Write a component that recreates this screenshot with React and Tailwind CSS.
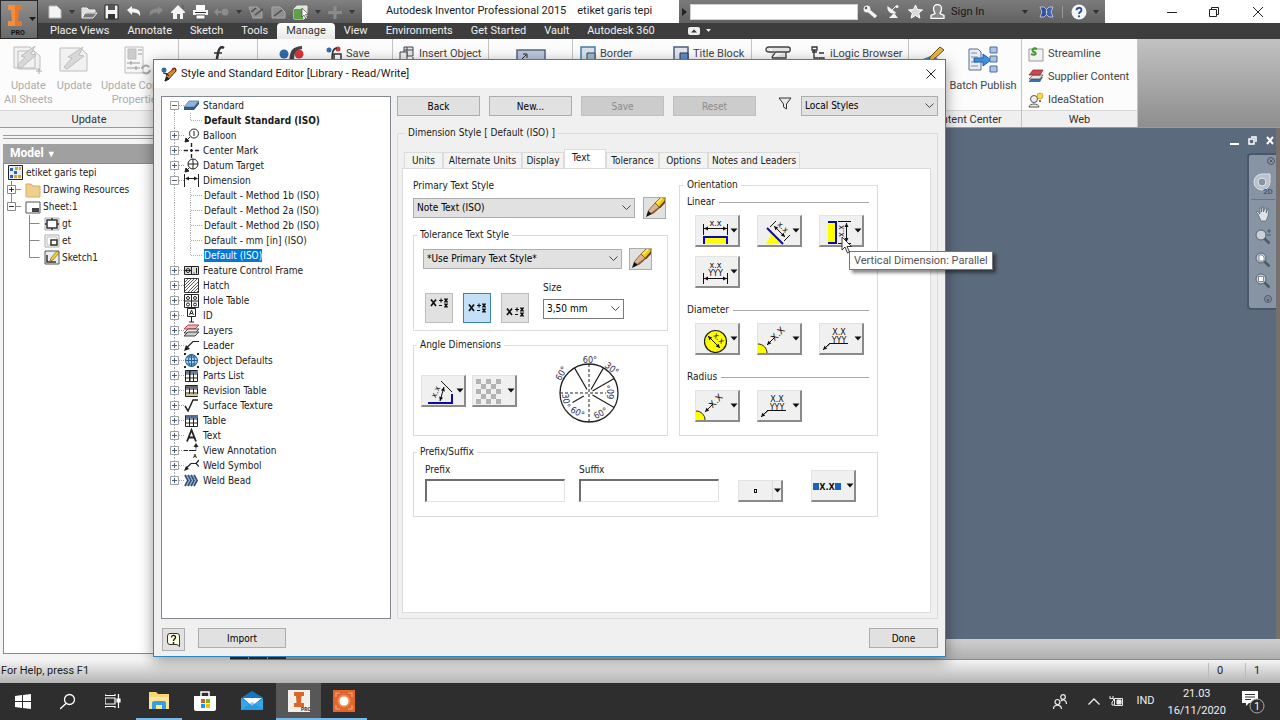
import React from "react";

const UI = "font-['Roboto','Liberation_Sans',sans-serif]";
const DLG = "font-['DejaVu_Sans_Condensed','DejaVu_Sans',sans-serif]";

/* ---------- quick access toolbar ---------- */

const quick = [
  ["New", <path key="a" d="M4 3h8l4 4v8H4z" fill="#f4f4f4" stroke="#bbb" />],
  ["caret"],
  ["Open", <g key="a"><path d="M3 5h5l2 2h6v2H7l-4 6z" fill="#ddd" stroke="#eee" /><path d="M6 10h12l-4 5H3z" fill="#777" stroke="#eee" /></g>],
  ["Save", <g key="a"><path d="M4 2h13v14H4z" fill="#f4f4f4" stroke="#222" /><path d="M7 2h7v5H7z" fill="#555" /><path d="M7 11h7v5H7z" fill="#333" /></g>],
  ["Undo", <path key="a" d="M3 7l5-4v2.500c6 0 9 2 8 8-1-3-3-4-8-4V12z" fill="#f4f4f4" />],
  ["Redo", <path key="a" d="M17 7l-5-4v2.500c-6 0-9 2-8 8 1-3 3-4 8-4V12z" fill="#8b8b8b" />],
  ["Home", <g key="a"><path d="M3 9l7-7 7 7v1h-2v6H5v-6H3z" fill="#f4f4f4" /><path d="M9 11h3v5H9zM14 2h2v4h-2z" fill="#666" /></g>],
  ["Print", <g key="a"><path d="M6 2h9v5H6z" fill="#fff" /><path d="M3 7h15v5H3z" fill="#f4f4f4" /><path d="M5 9.500h11" stroke="#333" /><path d="M6 12h9v4H6z" fill="#fff" stroke="#555" /></g>],
  ["Return", <g key="a" fill="#8d8d8d"><path d="M2 9l4-4v3h3v2H6v3z" /><circle cx="13" cy="9" r="3.500" /></g>],
  ["caret"],
  ["Update", <g key="a"><path d="M3 4h8l5 5v6H7z" fill="#8f8f8f" stroke="#a8a8a8" /><path d="M9 12l8-6M5 9l5-4" stroke="#4c4c4c" strokeWidth="1.500" /></g>],
  ["Local update", <g key="a"><path d="M4 4h8l5 5v6H4z" fill="#8f8f8f" stroke="#a8a8a8" /><path d="M6 13l8-6" stroke="#4c4c4c" strokeWidth="1.500" /></g>],
  ["Select", <g key="a"><path d="M3 6l3-3h10v10l-3 3H3z" fill="#d9e8d2" stroke="#eee" /><path d="M3 6h9v10H3z" fill="#5fa04a" /><path d="M11 5v9l2-2 2 4 1.500-1-2-3.500h3z" fill="#fff" stroke="#333" strokeWidth=".6" /></g>],
  ["caret"],
  ["Add", <path key="a" d="M10 3v13M3 9.500h14" stroke="#8b8b8b" strokeWidth="3" />],
  ["caret"],
];

function QuickBar() {
  return (
    <div className="flex w-[324px] shrink-0 items-center justify-between pl-1.5 pr-1">
      {quick.map(([n, d], i) =>
        n === "caret" ? (
          <button key={i} aria-label="More" className="flex w-3 justify-center">
            <svg width="6" height="4"><path d="M0 0h6L3 4z" fill="#3a3a3a" /></svg>
          </button>
        ) : (
          <button key={i} aria-label={n} className="flex w-[22px] justify-center">
            <svg width="20" height="18" fill="none">{d}</svg>
          </button>
        )
      )}
    </div>
  );
}

function InfoCenter() {
  return (
    <div className="flex w-[426px] shrink-0 items-center bg-gradient-to-b from-[#7b7b7b] to-[#616161]">
      <button aria-label="Collapse search" className="flex h-full w-[11px] items-center justify-center">
        <svg width="5" height="8"><path d="M0 0l5 4-5 4z" fill="#222" /></svg>
      </button>
      <input aria-label="Search help" className="h-[16px] w-[168px] border border-[#d0d0d0] bg-white" />
      <button aria-label="Key" className="flex w-6 justify-center">
        <svg width="16" height="16"><circle cx="5" cy="5" r="4" fill="#f2f2f2" stroke="#444" strokeWidth=".6" /><path d="M7 7l7 6" stroke="#f2f2f2" strokeWidth="3.500" /><circle cx="4" cy="4" r="1.200" fill="#555" /></svg>
      </button>
      <button aria-label="Communication" className="flex w-[22px] justify-center">
        <svg width="15" height="15"><path d="M1.500 2c-1 6 4 9 9 7z" fill="#f2f2f2" /><path d="M6 6l4-4" stroke="#f2f2f2" /><path d="M3 14h9l-4-5z" fill="#f2f2f2" /><circle cx="11" cy="2.500" r="1.500" fill="#f2f2f2" /></svg>
      </button>
      <button aria-label="Favorites" className="flex w-[22px] justify-center">
        <svg width="15" height="15"><path d="M7.500 1l2 4.500 5 .4-3.800 3.200 1.200 5-4.400-2.600-4.400 2.600 1.200-5L.5 5.900l5-.4z" fill="#d8d8d8" stroke="#fff" /></svg>
      </button>
      <button className="flex items-center gap-1.5 pl-1 leading-6 text-[#161616]">
        <svg width="15" height="15"><path d="M3.500 4.500a4 4 0 018 0c0 3-1.500 4-1.500 5l4 2v3H1v-3l4-2c0-1-1.500-2-1.500-5z" fill="#888" stroke="#fff" strokeWidth="1.300" /></svg>
        <span>Sign In</span>
      </button>
      <span className="flex-1" />
      <svg width="6" height="4"><path d="M0 0h6L3 4z" fill="#2f2f2f" /></svg>
      <button aria-label="Exchange" className="ml-[10px] flex w-4 justify-center">
        <svg width="15" height="12"><path d="M1 1h4l3 3-1 2 1 2-3 3H1l2-5z" fill="#2f4f9c" stroke="#dfe6f6" strokeWidth=".7" /><path d="M14 1h-4L7 4l1 2-1 2 3 3h4l-2-5z" fill="#3d62b5" stroke="#dfe6f6" strokeWidth=".7" /></svg>
      </button>
      <span className="mx-2 h-3 w-px bg-[#999]" />
      <button aria-label="Help" className="flex w-4 justify-center">
        <svg width="16" height="16"><circle cx="8" cy="8" r="7.500" fill="#f4f6fb" /><path d="M5.500 6.200C5.500 3 10.500 3 10.500 6c0 2-2.500 2-2.500 4" fill="none" stroke="#2a4a9a" strokeWidth="1.800" /><circle cx="8" cy="12.300" r="1.100" fill="#2a4a9a" /></svg>
      </button>
      <svg className="mx-1.5" width="6" height="4"><path d="M0 0h6L3 4z" fill="#2f2f2f" /></svg>
    </div>
  );
}

const menu = ["Place Views", "Annotate", "Sketch", "Tools", "Manage", "View", "Environments", "Get Started", "Vault", "Autodesk 360"];

function Header() {
  return (
    <header className="flex bg-[#3d3d3d]">
      <button aria-label="Inventor menu" className="flex h-[39px] w-[38px] shrink-0 border border-[#2a2a2a] bg-gradient-to-b from-[#8f8f8f] to-[#6a6a6a]">
        <svg width="36" height="37">
          <path d="M7 4h14v5h-3l-1 11h4v5H7v-5h4l-1-11H7z" fill="#e8772a" />
          <path d="M7 4h7v21H7v-5h4l-1-11H7z" fill="#f59a4a" opacity=".7" />
          <path d="M28 16h7l-3.500 4z" fill="#1d1d1d" />
          <text x="10" y="34" fontSize="7" fontWeight="bold" fill="#111" fontFamily="Roboto, sans-serif">PRO</text>
        </svg>
      </button>
      <div className="flex min-w-0 flex-1 flex-col">
        <div className="flex h-[23px] bg-gradient-to-b from-[#818181] to-[#5a5a5a]">
          <QuickBar />
          <div className="flex flex-1 items-center gap-[11px] bg-white px-6 text-[#1c1c1c]">
            <span>Autodesk Inventor Professional 2015</span>
            <span>etiket garis tepi</span>
          </div>
          <InfoCenter />
          <div className="flex w-[175px] shrink-0 items-center justify-end bg-white text-[#222]">
            <button aria-label="Minimize" className="flex w-[42px] justify-center"><svg width="10" height="10"><path d="M0 5.500h10" stroke="currentColor" /></svg></button>
            <button aria-label="Restore" className="flex w-[42px] justify-center"><svg width="10" height="10" fill="none" stroke="currentColor"><path d="M.5 2.500h7v7h-7zM2.500 2V.5h7v7H8" /></svg></button>
            <button aria-label="Close" className="flex w-[45px] justify-center"><svg width="10" height="10" stroke="currentColor"><path d="M0 0l10 10M10 0L0 10" /></svg></button>
          </div>
        </div>
        <nav className="flex h-4 items-stretch pl-[3px] text-[#f0f0f0]">
          {menu.map((m) => (
            <button key={m} className={m === "Manage" ? "rounded-t-sm bg-gradient-to-b from-white to-[#e8e8e8] px-[9px] text-[#333]" : "px-[9px]"}>{m}</button>
          ))}
          <button aria-label="Ribbon display" className="flex items-center gap-1.5 pl-6">
            <svg width="12" height="8"><rect width="12" height="8" rx="2" fill="#eee" /><path d="M3 5.500h6l-3-3z" fill="#333" /></svg>
            <svg width="5" height="4"><path d="M0 0h5L2.500 3z" fill="#eee" /></svg>
          </button>
        </nav>
      </div>
    </header>
  );
}

/* ---------- ribbon ---------- */

function Panel({ className, title, children }) {
  return (
    <section className={"flex shrink-0 flex-col border-r border-[#c4c4c4] " + className}>
      <div className="flex h-[71px] overflow-hidden bg-[#fcfcfc] pt-[7px]">{children}</div>
      <h2 className="h-[17px] border-t border-[#d8d8d8] bg-[#efefef] text-center leading-[17px] text-[#333]">{title}</h2>
    </section>
  );
}

function Small({ icon, children, className = "" }) {
  return (
    <button className={"flex items-center gap-1 text-left leading-4 text-[#444] " + className}>
      <svg width="16" height="16" fill="none">{icon}</svg>
      <span>{children}</span>
    </button>
  );
}

function Ribbon() {
  return (
    <div className="flex h-[89px] whitespace-nowrap border-b border-[#9a9a9a] bg-gradient-to-b from-[#c2c2c2] to-[#8e8e8e]">
      <Panel className="w-[179px]" title="Update">
        <button className="flex w-[58px] flex-col items-center leading-[14px] text-[#adadad]">
          <svg width="30" height="33" fill="none" stroke="#bdbdbd"><path d="M1 1h16l5 5v16H1zM5 5h16l6 5v13H5z" fill="#f1f1f1" /><path d="M4 20l8-9-4-1L22 0l-4 8 5 1-15 13z" fill="#d8d8d8" /><path d="M23 25h6M26 22v6" stroke="#aaa" /></svg>
          <span>Update<br />All Sheets</span>
        </button>
        <button className="flex w-9 flex-col items-center leading-[14px] text-[#adadad]">
          <svg width="30" height="33" fill="none" stroke="#bdbdbd"><path d="M1 2h20l7 6v17H1z" fill="#f1f1f1" /><path d="M5 21l8-9-4-1L24 1l-4 8 5 1L8 23z" fill="#d8d8d8" /></svg>
          <span>Update</span>
        </button>
        <button className="ml-1 flex w-[84px] flex-col items-center leading-[14px] text-[#adadad]">
          <svg width="30" height="33" fill="none" stroke="#bdbdbd"><path d="M3 1h18v26H3z" fill="#f6f6f6" /><path d="M6 3h8v10H6z" fill="#ccc" /><path d="M16 4h4M16 8h4M5 17h13M5 22h13M9 15v4M14 20v4" stroke="#999" /><path d="M20 23a4 4 0 017-2M28 24a4 4 0 01-7 2" stroke="#aaa" strokeWidth="2" /></svg>
          <span>Update Copied<br />Properties</span>
        </button>
      </Panel>
      <Panel className="w-[79px]">
        <button aria-label="Parameters" className="flex w-full justify-center">
          <svg width="24" height="30" fill="none" stroke="#333"><path d="M18 2c-3-2-5 0-6 5l-2 11c-1 4-3 5-5 3" strokeWidth="2.500" /><path d="M8 7h8" strokeWidth="1.500" /></svg>
        </button>
      </Panel>
      <Panel className="w-[135px]">
        <button aria-label="Styles Editor" className="flex w-[68px] justify-center">
          <svg width="26" height="30"><circle cx="5" cy="8" r="4.500" fill="#2f6cab" /><circle cx="20" cy="8" r="4.500" fill="#d8363d" /><path d="M10 18C11 5 12 1 23 0v3c-7 1-8 3-8 15z" fill="#444" /></svg>
        </button>
        <Small className="h-4" icon={<g><circle cx="3" cy="4" r="2.500" fill="#2f6cab" /><circle cx="12" cy="3" r="2.500" fill="#d8363d" /><path d="M6 14C6 6 7 2 11 2M8 8h7v7H8z" stroke="#333" strokeWidth="1.500" /></g>}>Save</Small>
      </Panel>
      <Panel className="w-[96px]">
        <Small className="ml-1.5 h-4" icon={<g stroke="#444"><path d="M5 1h9v9H5z" fill="#dfe6f0" /><path d="M5 4h9M8 1v9" /><path d="M1 6h7v9H1z" fill="#eee" /><path d="M10 14h4v-3" /></g>}>Insert Object</Small>
      </Panel>
      <Panel className="w-[84px]">
        <button aria-label="Attach" className="flex w-full justify-center">
          <svg width="30" height="30"><path d="M1 4h28v20H1z" fill="#b9c7dc" stroke="#53657e" strokeWidth="1.500" /><path d="M5 14l5-5M7 8h4v4" stroke="#222" fill="none" /></svg>
        </button>
      </Panel>
      <Panel className="w-[179px]">
        <Small className="ml-[7px] h-4 w-[93px]" icon={<g><path d="M1 1h14v14H1z" fill="#d6e2ee" stroke="#3f7fae" strokeWidth="1.500" /><path d="M7 7h8v8H7z" fill="#9db9d4" stroke="#444" /></g>}>Border</Small>
        <Small className="h-4" icon={<g><path d="M1 1h14v14H1z" fill="#e2e6ee" stroke="#4b5f85" strokeWidth="1.500" /><path d="M7 7h8v8H7z" fill="#5f8fd0" stroke="#334" /></g>}>Title Block</Small>
      </Panel>
      <Panel className="w-[157px]">
        <button aria-label="Add Rule" className="ml-3 flex w-[46px]">
          <svg width="28" height="20"><path d="M5 1h19c3 0 3 5 0 5H11c0 3-3 3-3 6M5 1c-4 0-4 5 0 5h5M8 12h14V6" fill="#e6e6e6" stroke="#444" strokeWidth="1.300" /></svg>
        </button>
        <Small className="h-4" icon={<g stroke="#333" strokeWidth="1.300"><path d="M2 1h5v3H2zM2 6h5M4 4v8h4M9 7h5M9 12h5v2H9z" /></g>}>iLogic Browser</Small>
      </Panel>
      <Panel className="w-[113px]" title="Content Center">
        <button aria-label="Editor" className="ml-3 flex w-[26px]">
          <svg width="26" height="24"><path d="M2 13l10-4 10 8-10 6z" fill="#3d85c0" /><path d="M9 11L19 1l4 3-11 10-4 1z" fill="#e8b64a" stroke="#6b4a1a" /></svg>
        </button>
        <button className="flex w-[72px] flex-col items-center leading-[14px] text-[#444]">
          <svg width="32" height="33" fill="none"><path d="M2 3h9l3 3v18H2z" fill="#e8edf4" stroke="#5b6f8d" /><path d="M4 7h6M4 11h7M4 16h7M4 20h7" stroke="#7a8aa5" /><path d="M7 12h9V8l8 6-8 6v-4H7z" fill="#3f8fdc" stroke="#1c5fa8" /><path d="M23 1h7v6h-7zM23 10h7v6h-7zM23 20h7v6h-7z" fill="#a9c4e6" stroke="#4b6e9f" /></svg>
          <span>Batch Publish</span>
        </button>
      </Panel>
      <Panel className="w-[116px]" title="Web">
        <div className="flex flex-col gap-[7px] pl-[6px]">
          <Small icon={<g><path d="M1 3h14v12H1z" fill="#f2f2f2" stroke="#999" /><path d="M9 3C5 1 3 5 6 6s2 4-3 2" stroke="#3f9a2e" strokeWidth="2" /></g>}>Streamline</Small>
          <Small icon={<g><path d="M1 12l4-4h10l-3 5H1z" fill="#3f6ea8" /><path d="M1 10l4-4h10l-3 4z" fill="#dfe3ea" stroke="#444" strokeWidth=".7" /><path d="M1 6l4-5h10l-3 5z" fill="#cc4a4f" stroke="#7a2226" strokeWidth=".7" /></g>}>Supplier Content</Small>
          <Small icon={<g><circle cx="6" cy="7" r="3.500" fill="#eee" stroke="#555" /><path d="M1 15c0-4 10-4 10 0z" fill="#eee" stroke="#555" /><circle cx="12" cy="4" r="3" fill="#f6d94a" stroke="#b8941c" strokeWidth=".7" /><path d="M11 8h2v2h-2z" fill="#777" /></g>}>IdeaStation</Small>
        </div>
      </Panel>
    </div>
  );
}

/* ---------- model browser ---------- */

const modelRows = [
  [1, "+", "Drawing Resources", <path key="a" d="M1 2h5l2 2h7v11H1z" fill="#f0cf8e" stroke="#d8ad5c" />],
  [1, "-", "Sheet:1", <g key="a"><path d="M1 3h14v11H1z" fill="#fff" stroke="#555" /><path d="M7 9h7v4H7z" fill="#444" /></g>],
  [2, "├", "gt", <g key="a"><path d="M1 2h14v12H1z" fill="#fff" stroke="#aaa" /><path d="M3 4h10v8H3zM1 8h2M13 8h2M8 2v2M8 12v2" stroke="#333" strokeWidth="1.500" /></g>],
  [2, "├", "et", <g key="a"><path d="M1 2h14v12H1z" fill="#fff" stroke="#aaa" /><path d="M3 4h10v8H3z" stroke="#bbb" /><path d="M7 7h6v5H7z" stroke="#333" strokeWidth="1.500" /></g>],
  [2, "└", "Sketch1", <g key="a"><path d="M1 1h14v13H1z" fill="#e9ecf4" stroke="#555" /><path d="M3 5v7h9" stroke="#333" strokeWidth="1.500" /><path d="M7 8l6-7 2 2-6 7-3 1z" fill="#f2cc35" stroke="#8a6a10" strokeWidth=".7" /></g>],
];

function ModelBrowser() {
  return (
    <aside className="flex w-[230px] shrink-0 flex-col bg-[#f4f4f4] pb-1.5 pl-[3px]">
      <div className="mb-[5px] mt-[7px] h-1 border-y border-[#9a9a9a]" />
      <button className="h-[19px] bg-[#a0a0a0] pl-[7px] text-left text-[12px] font-bold leading-[19px] text-white">Model <span className="text-[9px]">▼</span></button>
      <ul className={"flex-1 border border-[#8a8a8a] bg-white text-[10px] text-[#222] " + DLG}>
        <li className="flex h-[17px] items-center gap-[3px] pl-1">
          <svg width="15" height="15"><path d="M.5.5h14v14H.5z" fill="#e9edf5" stroke="#222" /><path d="M2 3h3v3H2zM6 6h3v3H6zM2 10h3v3H2z" fill="#2b62b0" /><path d="M7 2h3v3H7zM11 2h2v3h-2zM10 10h3v3h-3zM6 10h3v3H6z" fill="#d9a531" /></svg>
          etiket garis tepi
        </li>
        {modelRows.map(([lvl, k, t, ic]) => (
          <li key={t} className="flex h-[17px] items-center gap-0.5">
            {lvl === 1 ? (
              <button aria-label={"Toggle " + t} className="ml-[2px] flex">
                <svg width="17" height="17" fill="none" stroke="#888"><path d={k === "+" ? "M5.500 0v17M9 8.500h6" : "M5.500 0v5M9 8.500h6"} /><path d="M1.500 4.500h8v8h-8z" fill="#fff" /><path d={k === "+" ? "M3 8.500h5M5.500 6v5" : "M3 8.500h5"} stroke="#333" /></svg>
              </button>
            ) : (
              <svg className="ml-[20px]" width="18" height="17" fill="none" stroke="#888"><path d={k === "└" ? "M5.500 0v8.500h10" : "M5.500 0v17M5.500 8.500h10"} /></svg>
            )}
            <svg width="16" height="16" fill="none">{ic}</svg>
            <span>{t}</span>
          </li>
        ))}
      </ul>
    </aside>
  );
}

/* ---------- canvas ---------- */

const lens = <><circle cx="7" cy="7" r="5" fill="#c9d0d8" stroke="#55616f" /><path d="M10.500 10.500l5 5" stroke="#4d5a68" strokeWidth="2.500" /></>;

function Canvas() {
  return (
    <main className="flex min-w-0 flex-1 flex-col">
      <div className="flex flex-1 bg-[#5c6a7e]">
        <div className="flex flex-1 flex-col items-end pt-2">
          <div className="flex items-center gap-[9px] pr-0.5 text-white">
            <button aria-label="Minimize document"><svg width="9" height="9"><path d="M0 8h9" stroke="currentColor" strokeWidth="2" /></svg></button>
            <button aria-label="Restore document"><svg width="9" height="9" fill="none" stroke="currentColor" strokeWidth="1.500"><path d="M1 3h5v5H1zM3 1h5v5" /></svg></button>
            <button aria-label="Close document"><svg width="8" height="9"><path d="M1 1l6 7M7 1L1 8" stroke="currentColor" strokeWidth="2" /></svg></button>
          </div>
          <div className="mt-2 flex h-[157px] w-[29px] flex-col items-center rounded-l border-2 border-r-0 border-[#48576b] bg-[#8794a3]">
            <button aria-label="Close navigation bar" className="self-end pr-px pt-0.5"><svg width="8" height="8" stroke="#4d5a68"><circle cx="4" cy="4" r="3.500" fill="none" /><path d="M2.500 2.500l3 3M5.500 2.500l-3 3" /></svg></button>
            <button aria-label="Steering wheel" className="mt-2 border-b border-[#66758a] pb-1"><svg width="24" height="22"><path d="M3 9a8 8 0 018-8h8v8a8 8 0 01-16 0z" fill="#b9c1ca" stroke="#dde2e7" /><circle cx="11" cy="9" r="4" fill="#8794a3" stroke="#e6e9ed" /><text x="12" y="21" fontSize="8" fontWeight="bold" fill="#41607f" fontFamily="Roboto, sans-serif">2D</text></svg></button>
            <button aria-label="Pan" className="mt-1.5"><svg width="16" height="16"><path d="M3 8l-2-2 1-1 3 3V2h1.500v4L7 1h1.500v5L10 2h1.300v5l1.500-4H14l-1 7-2 5H6z" fill="#dfe3e8" stroke="#55616f" strokeWidth=".7" /></svg></button>
            <button aria-label="Zoom" className="mt-1.5"><svg width="18" height="17">{lens}<path d="M13 3h4M15 1v4M13 7h4" stroke="#41607f" /></svg></button>
            <button aria-label="Zoom all" className="mt-1.5"><svg width="18" height="17">{lens}<path d="M5 4h3l2 2v4H5z" fill="#fff" stroke="#55616f" strokeWidth=".7" /></svg></button>
            <button aria-label="Zoom window" className="mt-1"><svg width="18" height="17">{lens}<path d="M4.500 4.500h5v5h-5z" fill="#fff" stroke="#55616f" strokeWidth=".7" /></svg></button>
            <button aria-label="Customize" className="mt-1.5 self-end pr-1"><svg width="8" height="8"><circle cx="4" cy="4" r="3.500" fill="none" stroke="#4d5a68" /><path d="M2 3h4M2.500 4.500h3L4 6.500z" fill="#4d5a68" stroke="#4d5a68" strokeWidth=".5" /></svg></button>
          </div>
        </div>
        <div className="w-1 bg-[#77706d]" />
      </div>
      <div className="h-[21px] border-b border-[#8a8a8a] bg-gradient-to-b from-[#cfcfcf] to-[#aeb0ae] pt-[18px]">
        <div className="flex gap-px"><span className="h-0.5 w-[18px] bg-[#333]" /><span className="h-0.5 w-[18px] bg-[#333]" /><span className="h-0.5 w-[18px] bg-[#333]" /></div>
      </div>
    </main>
  );
}

/* ---------- style tree ---------- */

const K = "#222";
const grid = <g stroke="#222"><path d="M1.500 2.500h12v11h-12z" fill="#fff" /><path d="M1.500 6h12M1.500 10h12M5.500 3v10M9.500 3v10" /></g>;
const styles = [
  ["-", "Standard", <g key="a"><path d="M5 3h10l-5 6H0z" fill="#8db4dc" stroke="#4a6f99" strokeWidth=".7" /><path d="M0 9v3h10l5-6V3l-5 6z" fill="#35597f" /></g>],
  ["c", "Default Standard (ISO)"],
  ["+", "Balloon", <g key="a" stroke={K}><circle cx="10" cy="5.500" r="4.500" fill="#fff" /><path d="M10 3v5M6 9l-5 5" /><path d="M1 14l1-4 3 3z" fill={K} /></g>],
  ["+", "Center Mark", <path key="a" d="M0 7.500h4M6 7.500h3M11 7.500h4M7.500 0v4M7.500 6v3M7.500 11v4" stroke={K} strokeWidth="1.400" />],
  ["+", "Datum Target", <g key="a" stroke={K}><circle cx="9" cy="6" r="5" fill="#fff" /><path d="M4 6h10M9 1v10M5 10l-4 4" /><path d="M1 14l1-4 3 3z" fill={K} /></g>],
  ["-", "Dimension", <g key="a" stroke={K} fill={K}><path d="M.5 1v13M14.500 1v13M2 5.500h11" /><path d="M1 5.500l4-2v4zM14 5.500l-4-2v4z" stroke="none" /></g>],
  ["c", "Default - Method 1b (ISO)"],
  ["c", "Default - Method 2a (ISO)"],
  ["c", "Default - Method 2b (ISO)"],
  ["c", "Default - mm [in] (ISO)"],
  ["s", "Default (ISO)"],
  ["+", "Feature Control Frame", <g key="a" stroke={K}><path d="M.5 3.500h14v8H.5z" fill="#ddd" /><path d="M7.500 3v9M1 7.500h6M10 9.500v1M12.500 5v5.500" /><circle cx="4" cy="7.500" r="2" fill="none" /></g>],
  ["+", "Hatch", <g key="a" stroke="#333"><path d="M.5.500h14v14H.5z" fill="#fff" /><path d="M0 5l5-5M0 8l8-8M0 11l11-11M0 14l14-14M3 15L15 3M6 15l9-9M9 15l6-6M12 15l3-3" strokeWidth=".8" /></g>],
  ["+", "Hole Table", <g key="a" stroke={K}><path d="M.5 1.500h14v13H.5zM7.500 1v14M0 8h15" fill="#fff" /><circle cx="4" cy="5" r="1.500" /><circle cx="11" cy="5" r="1.500" /><circle cx="4" cy="11.500" r="1.500" /><circle cx="11" cy="11.500" r="1.500" /></g>],
  ["+", "ID", <g key="a" stroke={K}><path d="M3.500.500h8v8h-8z" fill="#fff" /><path d="M5.500 7l2-5 2 5M6.500 5.500h2M7.500 9v5M5 14h5" /></g>],
  ["+", "Layers", <g key="a"><path d="M4 2h11l-4 4H0z" fill="#f3b4b8" stroke="#c0404a" /><path d="M4 6h11l-4 4H0z" fill="#eee" stroke="#444" /><path d="M4 9h11l-4 4H0z" fill="#ccc" stroke="#444" /></g>],
  ["+", "Leader", <g key="a"><path d="M15 3.500H9l-7 7" stroke={K} strokeWidth="1.200" /><path d="M0 13l2-6 4 4z" fill={K} /></g>],
  ["+", "Object Defaults", <g key="a" stroke="#1f5f96"><circle cx="7.500" cy="7.500" r="6" fill="#a9d2ef" /><path d="M1.500 7.500h12M7.500 1.500v12M3 4h9M3 11h9" /><ellipse cx="7.500" cy="7.500" rx="3" ry="6" /><path d="M0 0h2v2H0zM13 0h2v2h-2zM0 13h2v2H0zM13 13h2v2h-2z" fill="#222" stroke="none" /></g>],
  ["+", "Parts List", <g key="a">{grid}<path d="M2 3h12v2.500H2z" fill="#5f7da6" /><path d="M5 3h1.500v11H5z" fill="#222" /></g>],
  ["+", "Revision Table", <g key="a">{grid}<path d="M2 3h12v2.500H2z" fill="#666" /><path d="M2 11h12v2H2z" fill="#d8c48c" /></g>],
  ["+", "Surface Texture", <path key="a" d="M1 8l3 5 5-11h5" stroke={K} strokeWidth="1.500" />],
  ["+", "Table", <g key="a">{grid}<path d="M2 2h12v3H2z" fill="#4a6d9c" /></g>],
  ["+", "Text", <path key="a" d="M3 13.500L7.500 2 12 13.500M4.500 9.500h6" stroke={K} strokeWidth="1.800" />],
  ["+", "View Annotation", <g key="a"><path d="M0 7.500h9M9 7.500h3V3" stroke={K} strokeDasharray="4 1" /><path d="M12 0l2.500 4h-5z" fill={K} /><path d="M9.500 15l1.500-4 1.500 4M10 13.500h2" stroke={K} strokeWidth=".8" /></g>],
  ["+", "Weld Symbol", <g key="a"><path d="M15 2l-3 3.500 3 3M12 5.500H7l-5 5" stroke={K} strokeWidth="1.200" /><path d="M0 13l2-5 3 3z" fill={K} /></g>],
  ["+", "Weld Bead", <g key="a"><path d="M1 2l3 5.500L1 13M4 2l3 5.500L4 13M7 2l3 5.500L7 13M10 2l3 5.500L10 13" stroke="#2f4f73" strokeWidth="1.800" /><path d="M2.500 2l3 5.500-3 5.500M5.500 2l3 5.500-3 5.500M8.500 2l3 5.500-3 5.500" stroke="#7da4cc" /></g>],
];

function StyleTree() {
  return (
    <ul className="h-[523px] w-[230px] shrink-0 overflow-hidden border border-[#828790] bg-white pl-[7px] pt-px">
      {styles.map(([k, t, ic], i) => {
        const child = k === "c" || k === "s";
        const last = i === styles.length - 1;
        const v = i === 0 ? "M5.500 8v7" : last ? "M5.500 0v8" : "M5.500 0v15";
        return (
          <li key={t} className="flex h-[15px] items-center">
            {child ? (
              <svg width="35" height="15" fill="none" stroke="#aaa" strokeDasharray="1 1"><path d={v} /><path d={i === 1 || k === "s" ? "M21.500 0v7.500" : "M21.500 0v15"} /><path d="M22 7.500h11" /></svg>
            ) : (
              <button aria-label={"Toggle " + t} className="flex">
                <svg width="15" height="15" fill="none"><path d={v} stroke="#aaa" strokeDasharray="1 1" /><path d="M10 7.500h5" stroke="#aaa" strokeDasharray="1 1" /><path d="M1.500 3.500h8v8h-8z" fill="#fff" stroke="#a0a0a0" /><path d={k === "-" ? "M3 7.500h5" : "M3 7.500h5M5.500 5v5"} stroke="#4a5f7c" /></svg>
              </button>
            )}
            {!child && <svg className="mr-1" width="15" height="15" fill="none">{ic}</svg>}
            <span className={k === "s" ? "bg-[#0078d7] leading-[13px] text-white" : i === 1 ? "font-bold leading-[15px]" : "leading-[15px]"}>{t}</span>
          </li>
        );
      })}
    </ul>
  );
}

/* ---------- dimension style form ---------- */

const btn = "h-5 border text-center leading-[17px] ";
const flat = btn + "border-[#adadad] bg-[#e1e1e1] text-black";
const off = btn + "border-[#bfbfbf] bg-[#cccccc] text-[#8b8b8b]";

function Pick({ id, label, options, className, white }) {
  return (
    <span className={"grid items-center " + className}>
      <select id={id} aria-label={label} className={"col-start-1 row-start-1 h-5 w-full appearance-none border pl-[3px] leading-[16px] text-black " + (white ? "border-[#7a7a7a] bg-white" : "border-[#adadad] bg-[#e1e1e1]")}>
        {options.map((o) => <option key={o}>{o}</option>)}
      </select>
      <svg className="pointer-events-none col-start-1 row-start-1 mr-1 justify-self-end" width="9" height="6" fill="none"><path d="M.5.500l4 4 4-4" stroke="#444" /></svg>
    </span>
  );
}

function PencilButton({ label }) {
  return (
    <button aria-label={label} className="h-[22px] w-[23px] border border-[#adadad] bg-[#e1e1e1]">
      <svg width="21" height="20"><path d="M4 13L11 5l5 4-8 7z" fill="#dcb48e" stroke="#6b4a2a" strokeWidth=".7" /><path d="M7 15l9-7 1 1-8 7z" fill="#8a5f3a" /><path d="M2 19l2-6 4 3z" fill="#111" /><path d="M11 5l5-5h5v4l-5 6z" fill="#f5c518" stroke="#6b4a10" strokeWidth=".7" /><path d="M12 5l5-5h2l-5 6z" fill="#ffe766" /><path d="M15 9l6-7v3l-5 5z" fill="#5c4210" /></svg>
    </button>
  );
}

const groupBox = "border border-[#dcdcdc]";
const legend = "ml-[3px] px-[3px] leading-4";

function ToolButton({ label, children, short }) {
  return (
    <button aria-label={label} className={"w-[45px] border border-b-2 border-r-2 border-b-[#8a8a8a] border-l-[#e3e3e3] border-r-[#8a8a8a] border-t-[#e3e3e3] bg-[#f0f0f0] " + (short ? "h-[22px]" : "h-8")}>
      <svg width="42" height={short ? 19 : 29} viewBox={short ? "0 0 42 19" : "1 1 42 29"} fill="none">
        {children}
        <path d={short ? "M35 7.500h7l-3.500 4z" : "M35.500 13.500h7L39 17.500z"} fill="#111" />
      </svg>
    </button>
  );
}

const T = ({ x, y, r = 0, s = 8, children }) => (
  <text x={x} y={y} transform={`rotate(${r} ${x} ${y})`} fontSize={s} fill="#111" textAnchor="middle" fontFamily="DejaVu Sans, sans-serif">{children}</text>
);

function Arrow({ x1, y1, x2, y2, single }) {
  const a = (Math.atan2(y2 - y1, x2 - x1) * 180) / Math.PI;
  return (
    <g>
      <path d={`M${x1} ${y1}L${x2} ${y2}`} stroke="#111" />
      <path d="M0 0l-4-2v4z" transform={`translate(${x2} ${y2}) rotate(${a})`} fill="#111" />
      {!single && <path d="M0 0l-4-2v4z" transform={`translate(${x1} ${y1}) rotate(${a + 180})`} fill="#111" />}
    </g>
  );
}

const LinearH = <><path d="M8.500 9v11M32.500 9v11" stroke="#111" /><Arrow x1={9} y1={13.5} x2={32} y2={13.5} /><T x={20.5} y={11}>x.x</T><path d="M9 29v-7h23v7" fill="#ff0" stroke="#0a0ab0" strokeWidth="2" /></>;
const Aligned = <><path d="M10 13l16 16h-8c-5 0-8 1-9-1l5-7z" fill="#ff0" /><path d="M10 13l16 16" stroke="#0a0ab0" strokeWidth="2" /><path d="M13 12l6-6M27 26l6-6" stroke="#111" /><Arrow x1={17} y1={11} x2={28} y2={22} /><T x={24} y={14} r={45}>x.x</T></>;
const LinearV = <><path d="M9 7h7v21H9z" fill="#ff0" /><path d="M9 7h8v21H9" stroke="#0a0ab0" strokeWidth="2" /><path d="M19 6.500h13M19 28.500h13" stroke="#111" /><Arrow x1={27.5} y1={8} x2={27.5} y2={27} /><T x={25} y={16} r={-90}>x.x</T></>;
const LinearSym = <><path d="M8.500 17v11M32.500 17v11" stroke="#111" /><Arrow x1={9} y1={22.5} x2={32} y2={22.5} /><T x={20.5} y={12}>x.x</T><T x={20.500} y={20}>YYY</T></>;
const DiaIn = <><circle cx="20.500" cy="18.500" r="11" fill="#ff0" stroke="#222" strokeWidth="1.200" /><Arrow x1={13} y1={13} x2={25} y2={25} /><T x={22} y={17} r={45}>x.x</T></>;
const DiaOut = <><path d="M1 21c5 0 9 4 9 9H1z" fill="#ff0" /><path d="M1 21c5 0 9 4 9 9" stroke="#222" /><Arrow x1={18} y1={14} x2={10} y2={22} single /><T x={23} y={13} r={-45} s={9}>X.X</T></>;
const LeaderSym = <><path d="M29 20.500H11l-3 3" stroke="#111" /><Arrow x1={11} y1={20} x2={4} y2={27} single /><T x={20} y={12}>X.X</T><T x={20} y={19.5}>YYY</T></>;
const Angle = <><path d="M7 28h24v-9" stroke="#0a0ab0" strokeWidth="2" /><path d="M20 6l11 11" stroke="#111" /><Arrow x1={19} y1={26} x2={23} y2={12} /><T x={17} y={18} r={-65}>x.x</T></>;

function Section({ title, children }) {
  return (
    <div>
      <div className="mb-[5px] mt-px flex items-center gap-1 pr-2 leading-4">
        <h3>{title}</h3>
        <span className="h-px flex-1 bg-[#a8a8a8]" />
      </div>
      <div className="grid w-fit grid-cols-3 gap-x-[17px] gap-y-[9px] pl-2">{children}</div>
    </div>
  );
}

function Placement({ active, label, y }) {
  return (
    <button aria-label={label} className={"h-[30px] w-7 border " + (active ? "border-[#3c7fb1] bg-[#c4e0f7]" : "border-[#bdbdbd] bg-[#e1e1e1]")}>
      <svg width="26" height="28" fill="none" stroke="#111">
        <g transform={`translate(0 ${y - 12})`}>
          <path d="M5 5.500l5 6.500M10 5.500l-5 6.500" strokeWidth="1.700" />
          <path d="M13 6.500h4M15 4.500v4M13 11.500h3" strokeWidth="1.200" />
          <path d="M18.500 4.500l3 4M21.500 4.500l-3 4M18.500 9.500l3 4M21.500 9.500l-3 4" strokeWidth="1.400" />
        </g>
      </svg>
    </button>
  );
}

function Dial() {
  const ray = (deg, a, b) => {
    const t = (deg * Math.PI) / 180;
    return `M${36 + a * Math.cos(t)} ${40 - a * Math.sin(t)}L${36 + b * Math.cos(t)} ${40 - b * Math.sin(t)}`;
  };
  return (
    <svg className="ml-9" width="72" height="76" fill="none" aria-label="Angle text orientation">
      <circle cx="36" cy="40" r="29" stroke="#222" strokeWidth="1.300" />
      <path d="M36 11v58M7 40h46" stroke="#222" strokeDasharray="3 2" />
      <path d={[60, 120, 30, -30].map((d) => ray(d, 4, 29)).join("") + ray(210, 6, 19)} stroke="#222" strokeWidth="1.200" />
      <g fill="#2b2b55" fontSize="9" fontFamily="DejaVu Sans Condensed, sans-serif" textAnchor="middle">
        <text x="37" y="10">60°</text>
        <text transform="translate(11 22) rotate(-60)">60°</text>
        <text transform="translate(57 18) rotate(38)">30°</text>
        <text transform="translate(61 39) rotate(-90)">60°</text>
        <text transform="translate(10 48) rotate(82)">30°</text>
        <text transform="translate(23 62) rotate(28)">60°</text>
        <text transform="translate(49 63) rotate(-28)">60°</text>
      </g>
    </svg>
  );
}

const tabs = [["Units", "w-[39px]"], ["Alternate Units", "w-[79px]"], ["Display", "w-[42px]"], ["Text", "w-[42px]"], ["Tolerance", "w-[53px]"], ["Options", "w-[49px]"], ["Notes and Leaders", "w-[92px]"]];

function Dialog() {
  return (
    <div role="dialog" aria-label="Style and Standard Editor" className={"absolute left-[153px] top-[59px] w-[793px] border border-[#2e86c1] bg-[#f0f0f0] text-[10px] text-[#1a1a1a] shadow-[0_4px_14px_rgba(0,0,0,0.4)] " + DLG}>
      <div className={"flex h-7 items-center bg-white pl-[7px] pr-[9px] text-[11px] " + UI}>
        <svg width="16" height="16"><circle cx="3" cy="4" r="2.500" fill="#2f6cab" /><circle cx="13" cy="4" r="2.500" fill="#d8363d" /><path d="M4 15L6 8l8-6 1 3-7 8z" fill="#d9892b" stroke="#222" strokeWidth=".8" /><path d="M2 7c3 0 5 1 6 3M4 15l2-4 2 2z" fill="#222" stroke="#222" /></svg>
        <h1 className="ml-1 flex-1">Style and Standard Editor [Library - Read/Write]</h1>
        <button aria-label="Close dialog"><svg width="10" height="10" stroke="#222"><path d="M.5.500l9 9M9.500.500l-9 9" /></svg></button>
      </div>
      <div className="flex gap-1.5 px-[7px] pt-2">
        <StyleTree />
        <div className="flex min-w-0 flex-1 flex-col">
          <div className="flex items-center">
            <div className="flex gap-[9px]">
              <button className={flat + " w-[83px]"}>Back</button>
              <button className={flat + " w-[83px]"}>New...</button>
              <button disabled className={off + " w-[83px]"}>Save</button>
              <button disabled className={off + " w-[83px]"}>Reset</button>
            </div>
            <span className="flex-1" />
            <svg width="14" height="18"><path d="M1 1h12L8.500 7v5l-3-2V7z" fill="#e8e8e8" stroke="#333" /></svg>
            <Pick label="Style filter" options={["Local Styles"]} className="ml-[9px] w-[137px]" />
          </div>
          <fieldset className={"mt-[9px] flex min-w-0 flex-1 flex-col pb-[5px] pl-1 pr-1.5 " + groupBox}>
            <legend className={legend}>Dimension Style [ Default (ISO) ]</legend>
            <div role="tablist" className="mt-2 flex items-end pl-0.5">
              {tabs.map(([t, w]) => (
                <button key={t} role="tab" aria-selected={t === "Text"} className={"whitespace-nowrap border border-b-0 border-[#dcdcdc] text-center " + w + (t === "Text" ? " h-[19px] bg-white pb-1 pr-2 leading-4" : " h-4 bg-[#f3f3f3] leading-[15px]")}>{t}</button>
              ))}
            </div>
            <div role="tabpanel" className="flex-1 border border-[#dcdcdc] bg-white pl-[10px] pt-2">
              <div className="flex gap-[11px]">
                <div className="w-[255px]">
                  <label htmlFor="primary" className="block pt-px leading-4">Primary Text Style</label>
                  <div className="mt-[3px] flex items-center gap-2">
                    <Pick id="primary" label="Primary Text Style" options={["Note Text (ISO)"]} className="w-[222px]" />
                    <PencilButton label="Edit primary text style" />
                  </div>
                  <fieldset className={"mt-2 pb-[7px] " + groupBox}>
                    <legend className={legend}>Tolerance Text Style</legend>
                    <div className="mt-[5px] flex items-center gap-[7px] pl-[9px]">
                      <Pick label="Tolerance Text Style" options={["*Use Primary Text Style*"]} className="w-[199px]" />
                      <PencilButton label="Edit tolerance text style" />
                    </div>
                    <div className="mt-[10px] flex items-end gap-[10px] pl-[11px]">
                      <Placement label="Top" y={12} />
                      <Placement label="Middle" y={17} active />
                      <Placement label="Bottom" y={21} />
                      <div className="ml-1 flex flex-col pb-1">
                        <label htmlFor="size" className="mb-[3px] leading-4">Size</label>
                        <Pick id="size" label="Size" options={["3,50 mm"]} className="w-[81px]" white />
                      </div>
                    </div>
                  </fieldset>
                  <fieldset className={"mt-1.5 h-[99px] " + groupBox}>
                    <legend className={legend}>Angle Dimensions</legend>
                    <div className="flex pl-[7px]">
                      <div className="flex gap-1.5 pt-[22px]">
                        <ToolButton label="Angular dimension">{Angle}</ToolButton>
                        <ToolButton label="Pattern">
                          {Array.from({ length: 25 }, (_, i) => i % 2 === 0 && <rect key={i} x={4 + (i % 5) * 5} y={4 + Math.floor(i / 5) * 5} width="5" height="5" fill="#b3b3b3" />)}
                        </ToolButton>
                      </div>
                      <Dial />
                    </div>
                  </fieldset>
                </div>
                <fieldset className={"flex w-[199px] flex-col gap-[13px] pl-[7px] " + groupBox}>
                  <legend className="ml-[-3px] px-[3px] leading-4">Orientation</legend>
                  <Section title="Linear">
                    <ToolButton label="Horizontal dimension">{LinearH}</ToolButton>
                    <ToolButton label="Aligned dimension">{Aligned}</ToolButton>
                    <ToolButton label="Vertical dimension">{LinearV}</ToolButton>
                    <ToolButton label="Symbol dimension">{LinearSym}</ToolButton>
                  </Section>
                  <Section title="Diameter">
                    <ToolButton label="Diameter inside">{DiaIn}</ToolButton>
                    <ToolButton label="Diameter outside">{DiaOut}</ToolButton>
                    <ToolButton label="Diameter leader">{LeaderSym}</ToolButton>
                  </Section>
                  <Section title="Radius">
                    <ToolButton label="Radius outside">{DiaOut}</ToolButton>
                    <ToolButton label="Radius leader">{LeaderSym}</ToolButton>
                  </Section>
                </fieldset>
              </div>
              <fieldset className={"mt-2 w-[465px] pb-[14px] " + groupBox}>
                <legend className={legend}>Prefix/Suffix</legend>
                <div className="mt-0.5 flex items-end pl-[11px]">
                  <div className="flex flex-col">
                    <label htmlFor="prefix" className="mb-px leading-4">Prefix</label>
                    <input id="prefix" className="h-[23px] w-[140px] border border-l-2 border-t-2 border-[#e3e3e3] border-l-[#6e6e6e] border-t-[#6e6e6e] bg-white" />
                  </div>
                  <div className="ml-[14px] flex flex-col">
                    <label htmlFor="suffix" className="mb-px leading-4">Suffix</label>
                    <input id="suffix" className="h-[23px] w-[140px] border border-l-2 border-t-2 border-[#e3e3e3] border-l-[#6e6e6e] border-t-[#6e6e6e] bg-white" />
                  </div>
                  <div className="ml-[19px] flex items-end gap-7">
                    <ToolButton label="Insert symbol" short>
                      <rect x="15.500" y="8.500" width="2" height="3" stroke="#111" />
                      <path d="M33.500 0v19" stroke="#d8d8d8" />
                    </ToolButton>
                    <ToolButton label="Symbol placement">
                      <path d="M2 13h6v7H2zM24 13h6v7h-6z" fill="#1565c0" />
                      <text x="16" y="20" fontSize="9" fontWeight="bold" fill="#111" textAnchor="middle" fontFamily="DejaVu Sans Condensed, sans-serif">X.X</text>
                    </ToolButton>
                  </div>
                </div>
              </fieldset>
            </div>
          </fieldset>
        </div>
      </div>
      <div className="flex items-start px-[7px] pb-[5px] pt-[9px]">
        <button aria-label="Help" className="ml-px flex h-[23px] w-[23px] items-center justify-center border border-[#adadad] bg-[#e1e1e1]">
          <svg width="13" height="14"><path d="M3 .5h7a2.500 2.500 0 012.500 2.500v10.500L10 11.500H3A2.500 2.500 0 01.5 9V3A2.500 2.500 0 013 .5z" fill="#fffde0" stroke="#333" /><path d="M4.500 4.500c0-3 4-2.500 4-.3C8.500 6 6.500 6 6.500 8" fill="none" stroke="#111" strokeWidth="1.300" /><circle cx="6.500" cy="10" r=".9" fill="#111" /></svg>
        </button>
        <button className={flat + " ml-[13px] w-[88px]"}>Import</button>
        <span className="flex-1" />
        <button className={flat + " w-[69px]"}>Done</button>
      </div>
    </div>
  );
}

/* ---------- taskbar ---------- */

const task = [
  ["Start", "", <g key="a" fill="#fff"><path d="M0 3l7-1v6H0zM8 2l8-1v7H8zM0 9h7v6l-7-1zM8 9h8v7l-8-1z" /></g>, "w-[45px]"],
  ["Search", "", <g key="a" stroke="#fff" strokeWidth="1.300"><circle cx="9.500" cy="6.500" r="5" /><path d="M6 10.500L0 16" /></g>, "w-[45px]"],
  ["Task view", "", <g key="a" stroke="#fff" strokeWidth="1.200"><path d="M0 5h10v6H0zM0 1v1.500h10V1M0 15v-1.500h10V15M13.500 1v14" /><path d="M12 6h3v3h-3z" fill="#fff" /></g>, "w-[46px]"],
  ["File Explorer", "u", <g key="a"><path d="M0 1h7l2 2h11v15H0z" fill="#f7d774" /><path d="M0 6h20v12H0z" fill="#fbe59a" /><path d="M3 18v-6c0-1 1-2 2-2h10c1 0 2 1 2 2v6h-4v-4H7v4z" fill="#3aa0dc" /></g>, "w-[46px]"],
  ["Store", "", <g key="a"><path d="M6 5V1h8v4" stroke="#fff" strokeWidth="1.500" /><path d="M-1 5h22v13a2 2 0 01-2 2H1a2 2 0 01-2-2z" fill="#fff" /><path d="M6 8h4v4H6z" fill="#e8532b" /><path d="M11 8h4v4h-4z" fill="#7fba00" /><path d="M6 13h4v4H6z" fill="#00a4ef" /><path d="M11 13h4v4h-4z" fill="#ffb900" /></g>, "w-[46px]"],
  ["Mail", "", <g key="a"><path d="M-1 7l11-7 12 7v12H-1z" fill="#1277c9" /><path d="M1 7h19l-10 8z" fill="#fff" /><path d="M-1 7l11 8 12-8v12H-1z" fill="#35a8ec" /><path d="M-1 19l11-8 12 8z" fill="#1c8cdc" opacity=".5" /></g>, "w-[48px]"],
  ["Inventor", "a", <g key="a"><path d="M-1-1h22v22H-1z" fill="#f3efeb" /><path d="M5 1h10v4h-2.500l-.5 7h3v4H5v-4h2.500L7 5H5z" fill="#d9662a" /><text x="12" y="20" fontSize="5" fontWeight="bold" fill="#333" fontFamily="Roboto, sans-serif">PRO</text></g>, "w-[45px]"],
  ["Recorder", "u", <g key="a"><path d="M-1-1h22v22H-1z" fill="#e2662c" /><circle cx="10" cy="10" r="6.500" fill="#f08a55" /><circle cx="10" cy="10" r="4.500" fill="#fff" /><path d="M2 6V2h4M14 2h4v4M18 14v4h-4M6 18H2v-4" stroke="#f4a67c" strokeWidth="1.200" /></g>, "w-[46px]"],
];

function Taskbar() {
  return (
    <footer className="flex h-[37px] items-stretch bg-[#2e2e2e] text-[#eee]">
      {task.map(([n, s, d, w]) => (
        <button key={n} aria-label={n} className={"flex items-center justify-center border-b-2 pt-px " + w + (s === "a" ? " border-[#76b9ed] bg-[#575757]" : s === "u" ? " border-[#76b9ed]" : " border-transparent")}>
          <svg width={s || n === "Store" || n === "Mail" ? 22 : 16} height={s || n === "Store" || n === "Mail" ? 22 : 17} viewBox={s || n === "Store" || n === "Mail" ? "-1 -1 22 22" : "0 0 16 17"} fill="none">{d}</svg>
        </button>
      ))}
      <span className="flex-1" />
      <div className="flex items-center">
        <button aria-label="People" className="mr-[21px]"><svg width="14" height="15" fill="none" stroke="#eee" strokeWidth="1.200"><circle cx="4.500" cy="8" r="2.500" /><path d="M.5 15c0-5 8-5 8 0" /><circle cx="10" cy="3" r="2.300" /><path d="M8 7c2-2 5.500-1 5.500 3" /></svg></button>
        <button aria-label="Hidden icons" className="mr-[9px]"><svg width="12" height="7" fill="none"><path d="M.5 6.500L6 1l5.500 5.500" stroke="#eee" strokeWidth="1.300" /></svg></button>
        <button aria-label="Battery" className="mr-3"><svg width="15" height="12" fill="none" stroke="#eee"><path d="M5.500 2.500h8v7h-8z" /><path d="M8 4h4v4H8z" fill="#eee" /><path d="M1 0v2M4 0v2M.5 2.500h4v2L3 6v3h2" /></svg></button>
        <button className="mr-[13px]">IND</button>
        <div className="mr-4 text-center leading-[17px]"><div>21.03</div><div>16/11/2020</div></div>
        <button aria-label="Notifications, 1 new" className="mr-[15px]"><svg width="23" height="24"><path d="M0 1h16v12h-9l-3 3v-3H0z" fill="#fff" /><path d="M3 4.500h10M3 7h10M3 9.500h6" stroke="#333" /><circle cx="15" cy="16" r="7" fill="#2e2e2e" stroke="#aaa" /><text x="15" y="20" fontSize="10" fill="#fff" textAnchor="middle" fontFamily="Roboto, sans-serif">1</text></svg></button>
      </div>
    </footer>
  );
}

export default function App() {
  return (
    <div className={"relative flex min-h-screen flex-col overflow-hidden bg-[#f0f0f0] text-[11px] " + UI}>
      <Header />
      <Ribbon />
      <div className="flex flex-1">
        <ModelBrowser />
        <Canvas />
      </div>
      <div className="flex h-[23px] items-center bg-gradient-to-b from-[#f4f4f4] to-[#b4b4b4] pl-px text-[#1c1c1c]">
        <span className="flex-1">For Help, press F1</span>
        <span className="w-[37px] border-l border-[#bbb] pl-2">0</span>
        <span className="w-[35px] border-l border-[#bbb] pl-2">1</span>
      </div>
      <Taskbar />
      <Dialog />
      <div role="tooltip" className="absolute left-[849px] top-[251px] border border-[#767676] bg-white px-[4px] leading-[17px] text-[#555] shadow-[3px_3px_3px_rgba(0,0,0,0.45)]">Vertical Dimension: Parallel</div>
      <svg className="absolute left-[841px] top-[236px]" width="12" height="18"><path d="M1 1v13l3-3 2.500 6 2-1L6 10.500h4.500z" fill="#fff" stroke="#222" strokeWidth=".9" /></svg>
    </div>
  );
}
